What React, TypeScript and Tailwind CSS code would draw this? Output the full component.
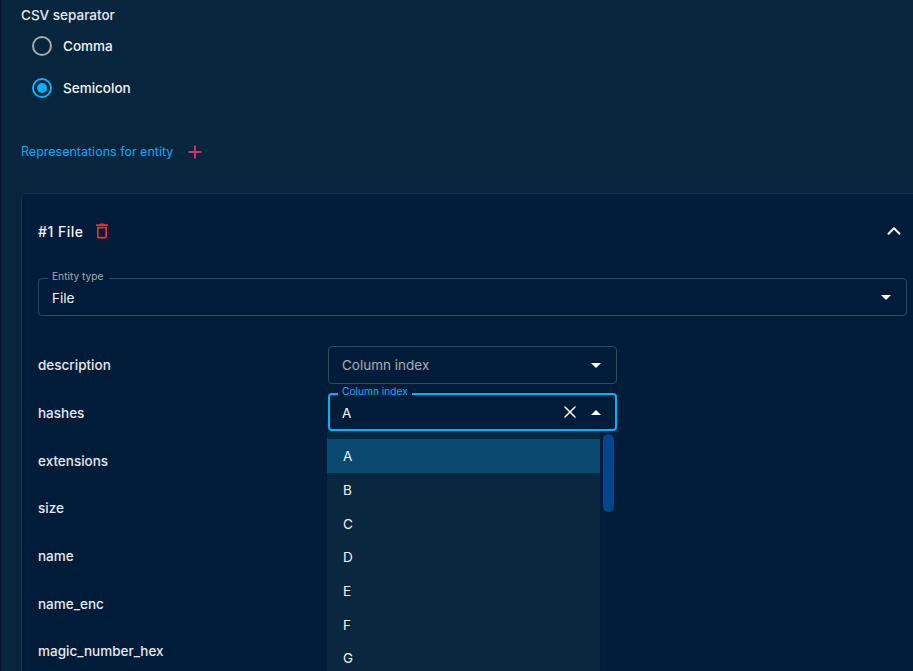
import { ChevronUp, Plus, X } from 'lucide-react'

const fields = ['description', 'hashes', 'extensions', 'size', 'name', 'name_enc', 'magic_number_hex']
const options = ['A', 'B', 'C', 'D', 'E', 'F', 'G']

function Caret({ up }: { up?: boolean }) {
  return (
    <svg width="10" height="5" viewBox="0 0 10 5" className={up ? 'rotate-180' : ''}>
      <path d="M0 0h10L5 5z" fill="#fff" />
    </svg>
  )
}

function TrashIcon() {
  return (
    <svg width="20" height="20" viewBox="0 0 24 24" className="ml-[8px]">
      <path
        d="M6 19a2 2 0 0 0 2 2h8a2 2 0 0 0 2-2V7H6v12M8 9h8v10H8V9m7.5-5l-1-1h-5l-1 1H5v2h14V4h-3.5z"
        fill="#e8352b"
      />
    </svg>
  )
}

function Radio({ label, checked }: { label: string; checked?: boolean }) {
  return (
    <div className="flex h-[42px] items-center pl-[11px]">
      <span
        className={`flex h-5 w-5 items-center justify-center rounded-full border-2 ${
          checked ? 'border-[#00b1ff]' : 'border-[#a3aab1]'
        }`}
      >
        {checked && <span className="h-2.5 w-2.5 rounded-full bg-[#00b1ff]" />}
      </span>
      <span className="ml-[11px] text-[13.5px] font-medium text-[#f2f4f5]">{label}</span>
    </div>
  )
}

function ColumnSelect() {
  return (
    <div className="flex h-[38px] w-[289px] items-center justify-between rounded border border-[#34495e] pl-[13px] pr-[15px]">
      <span className="text-[13.5px] text-[#a7adb5]">Column index</span>
      <Caret />
    </div>
  )
}

function OpenSelect() {
  return (
    <div className="relative mt-[-2px] w-[289px]">
      <div className="flex h-[38px] items-center justify-between rounded border-2 border-[#00b1ff] pl-[12px] pr-[14px]">
        <span className="pt-[1px] text-[13.5px] text-white">A</span>
        <div className="flex items-center gap-[11px]">
          <X size={20} color="#fff" strokeWidth={1.8} />
          <Caret up />
        </div>
      </div>
      <span className="absolute left-[10px] top-[-8px] bg-[#001c39] px-[4px] text-[10.2px] leading-[13px] text-[#00b1ff]">
        Column index
      </span>
      <div className="absolute left-[-1px] top-[38px] z-10 h-[300px] w-[273px] bg-[#09283f] pt-[8px]">
        {options.map((o, i) => (
          <div
            key={o}
            className={`flex h-[33.7px] items-center pl-[16px] pt-[1px] text-[13.5px] text-[#f2f4f5] ${
              i === 0 ? 'bg-[#0a4970]' : ''
            }`}
          >
            {o}
          </div>
        ))}
      </div>
      <div className="absolute left-[275px] top-[41px] z-10 h-[78px] w-[11px] rounded-md bg-[#02458a]" />
    </div>
  )
}

export default function App() {
  return (
    <div className="h-[671px] w-[913px] overflow-hidden border-l border-[#04182a] bg-[#07263e] pl-[20px] pt-[7px] font-['Inter',sans-serif]">
      <div className="text-[13.5px] font-medium leading-[16px] text-[#e6e9ec]">CSV separator</div>
      <div className="mt-[2px]">
        <Radio label="Comma" />
        <Radio label="Semicolon" checked />
      </div>

      <div className="mt-[33px] flex h-[20px] items-center">
        <span className="text-[12.5px] text-[#0fa6f0]">Representations for entity</span>
        <Plus size={20} color="#d0306f" strokeWidth={2.4} className="ml-[12px]" />
      </div>

      <div className="mt-[31px] w-[904px] rounded-t border border-[#15344d] bg-[#001c39] px-[16px] pt-[26px]">
        <div className="flex h-[22px] items-center justify-between">
          <div className="flex items-center">
            <span className="text-[14px] font-medium tracking-[0.5px] text-[#f2f4f5]">#1 File</span>
            <TrashIcon />
          </div>
          <ChevronUp size={22} color="#fff" strokeWidth={2.2} className="mr-[3px]" />
        </div>

        <div className="relative mt-[36px] flex h-[38px] w-[869px] items-center justify-between rounded border border-[#34495e] pl-[13px] pr-[15px]">
          <span className="pt-[2px] text-[13.5px] text-[#f2f4f5]">File</span>
          <Caret />
          <span className="absolute left-[9px] top-[-9px] bg-[#001c39] pl-[4px] pr-[5px] text-[10.2px] leading-[13px] text-[#a7adb5]">
            Entity type
          </span>
        </div>

        <div className="mt-[25.6px]">
          {fields.map((f, i) => (
            <div key={f} className="flex h-[47.7px] items-center">
              <span className="w-[290px] text-[13.5px] font-medium text-[#e6e9ec]">{f}</span>
              {i === 0 && <ColumnSelect />}
              {i === 1 && <OpenSelect />}
            </div>
          ))}
        </div>
      </div>
    </div>
  )
}
